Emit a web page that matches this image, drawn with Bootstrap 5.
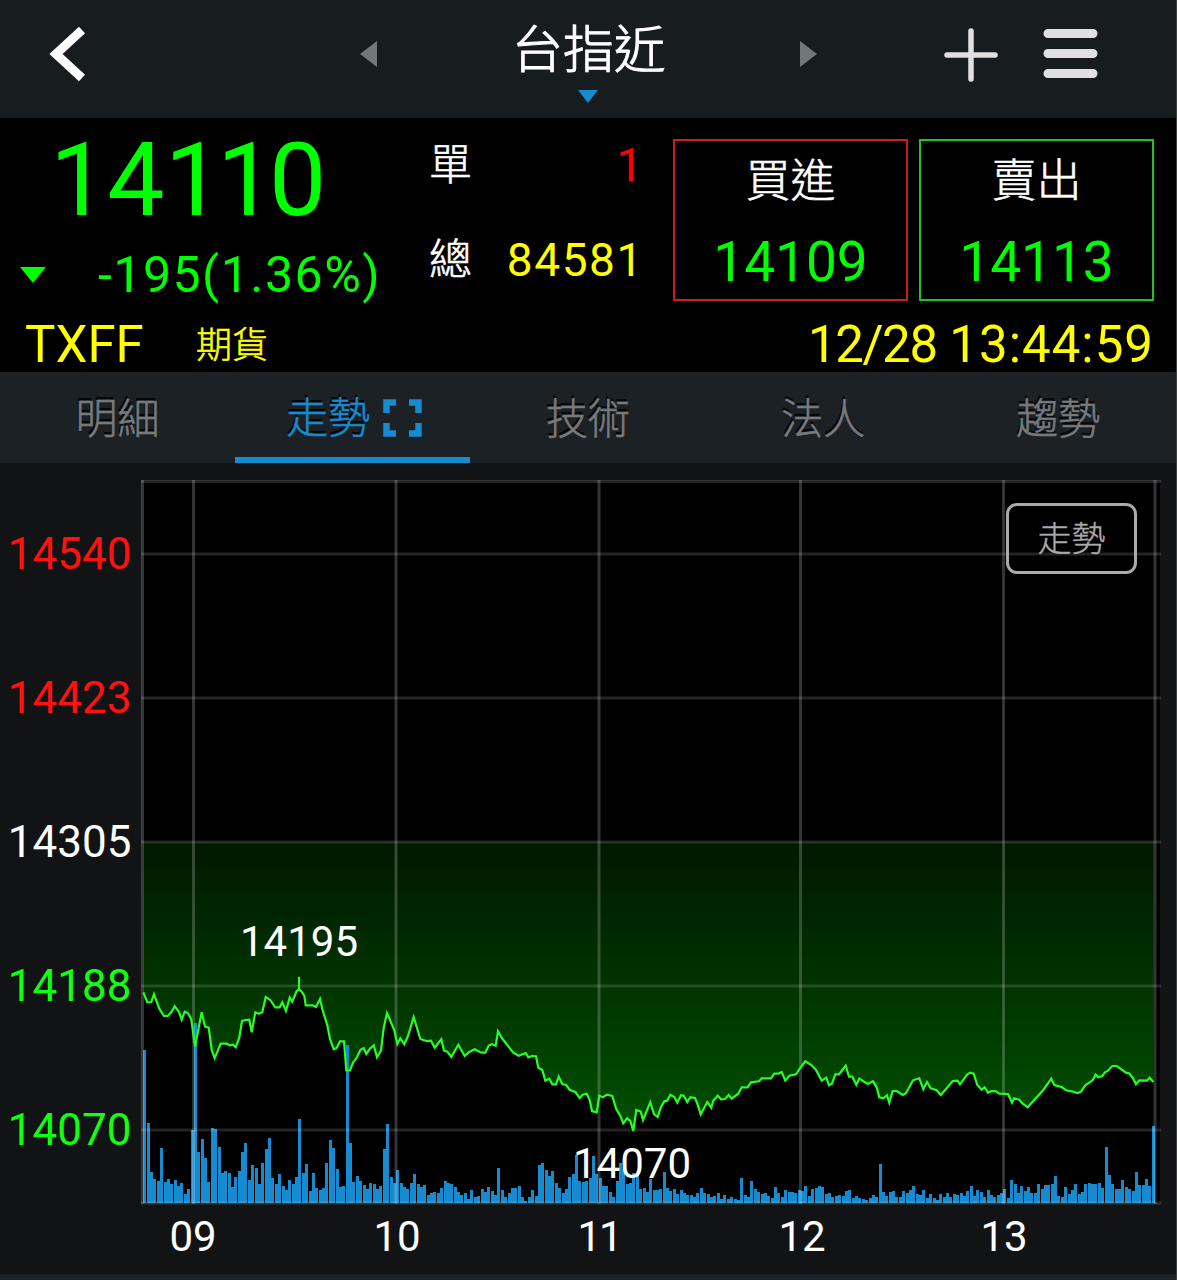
<!DOCTYPE html>
<html lang="zh-Hant">
<head>
<meta charset="utf-8">
<meta name="viewport" content="width=device-width, initial-scale=1">
<title>台指近</title>
<link rel="stylesheet" href="https://cdn.jsdelivr.net/npm/bootstrap@5.3.0/dist/css/bootstrap.min.css">
<style>
body{background:#121315;color:#fff;font-family:Roboto,"Noto Sans CJK TC",sans-serif;font-weight:400;overflow:hidden}
.screen{width:1177px;height:1280px;overflow:hidden;border-right:1px solid #3c4043}
.han{font-family:"Liberation Sans","Noto Sans CJK TC",sans-serif;font-weight:300;-webkit-text-stroke:.6px currentColor}
.topbar{height:118px;background:#171c1f}
.topbar svg{display:block}
.title-zone{width:457px;margin-left:270px}
.title-text{font-size:51px;line-height:72px;height:76px;padding-top:15px;-webkit-text-stroke-width:1px}
.quote{height:254px;background:#000}
.quote-main{height:199px}
.col-price{width:400px}
.last-price{font-size:102px;line-height:124px;padding-left:50px}
.ones{letter-spacing:-.05em}
.change-row{font-size:50px;line-height:66px}
.change-row svg{margin-left:20px;width:26px}
.change-text{margin-left:52px;letter-spacing:1.5px;white-space:nowrap}
.col-vol{width:273px;padding:0 29px 0 29px}
.vol-a{height:94px}.vol-b{height:96px}
.vol-label{font-size:43px}.vol-num{font-size:46px;letter-spacing:1.6px}
.deal{width:235px;height:162px;border:2px solid;margin-top:21px}
.deal-buy{border-color:#cc1c1c;margin-right:11px}
.deal-sell{border-color:#1fc41f}
.deal-name{font-size:45px;line-height:82px;color:#fff}
.deal-price{font-size:55px;line-height:78px}
.code-row{height:55px;line-height:55px;padding:0 22px 0 25px;font-size:51px}
.code{width:171px}
.kind{font-size:36px;line-height:57px}
.day{letter-spacing:-1.4px}
.clock{letter-spacing:1px}
.up{color:#f00}.down{color:#0f0}.warn{color:#ff0}
.tabs{height:91px;background:#1c2126}
.tabs .nav-link{width:20%;font-size:42px;line-height:95px;padding:0;height:91px;border-radius:0;color:#777a7c;text-align:center;text-shadow:-1px -3px 0 #050708}
.tabs .nav-link.active{color:#168bd0;background:none;line-height:90px;padding:2px 0 0 3px;box-shadow:inset 0 -6px #168bd0}
.tab-icon{margin:0 0 2px 8px}
.plot{height:817px;position:relative}
.plot svg{display:block}
.mode-btn{position:absolute;left:1006px;top:40px;width:131px;height:71px;border:3px solid #aaa;border-radius:11px;color:#aaa;font-size:34px;line-height:67px;padding:0;-webkit-text-stroke-width:.4px}
</style>
</head>
<body>
<div class="screen d-flex flex-column">
  <header class="topbar d-flex flex-shrink-0">
    <svg width="90" height="118"><path d="M82 30 56 54 82 78" fill="none" stroke="#fff" stroke-width="9"/></svg>
    <div class="title-zone d-flex justify-content-between">
      <svg width="18" height="118"><path d="M0 54 17 41V67Z" fill="#72777a"/></svg>
      <div class="text-center">
        <div class="title-text han">台指近</div>
        <svg class="mx-auto" width="20" height="30"><path d="M0 14H20L10 27Z" fill="#168bd0"/></svg>
      </div>
      <svg width="18" height="118"><path d="M18 54 1 41V67Z" fill="#72777a"/></svg>
    </div>
    <svg width="359" height="118"><g stroke="#e0e0e0" stroke-linecap="round" fill="none"><path d="M130 55H178M154 31V79" stroke-width="5.500"/><path d="M231 33.500H276M231 53.500H276M231 73.500H276" stroke-width="9"/></g></svg>
  </header>
  <section class="quote flex-shrink-0">
    <div class="quote-main d-flex">
      <div class="col-price down">
        <div class="last-price">14<span class="ones">11</span>0</div>
        <div class="change-row d-flex align-items-center"><svg height="18" viewBox="0 0 26 18"><path d="M0 1H26L13 17Z" fill="#0f0"/></svg><span class="change-text">-195(1.36%)</span></div>
      </div>
      <div class="col-vol">
        <div class="vol-a d-flex justify-content-between align-items-center"><span class="vol-label han">單</span><span class="vol-num up">1</span></div>
        <div class="vol-b d-flex justify-content-between align-items-center"><span class="vol-label han">總</span><span class="vol-num warn">84581</span></div>
      </div>
      <div class="deal deal-buy text-center down"><div class="deal-name han">買進</div><div class="deal-price">14109</div></div>
      <div class="deal deal-sell text-center down"><div class="deal-name han">賣出</div><div class="deal-price">14113</div></div>
    </div>
    <div class="code-row d-flex warn"><span class="code">TXFF</span><span class="kind han">期貨</span><span class="ms-auto"><span class="day">12/28</span> <span class="clock">13:44:59</span></span></div>
  </section>
  <nav class="tabs nav flex-nowrap flex-shrink-0 han">
    <a class="nav-link">明細</a>
    <a class="nav-link active d-flex justify-content-center align-items-center">走勢<svg class="tab-icon" width="44" height="38"><path d="M8.500 14V3.500H18M31 3.500H40.500V14M40.500 24V34.500H31M18 34.500H8.500V24" fill="none" stroke="#168bd0" stroke-width="6.500"/></svg></a>
    <a class="nav-link">技術</a>
    <a class="nav-link">法人</a>
    <a class="nav-link">趨勢</a>
  </nav>
  <main class="plot flex-shrink-0">
    <svg id="chart" width="1176" height="817" viewBox="0 463 1176 817" font-family="Roboto, sans-serif">
      <defs><linearGradient id="shade" gradientUnits="userSpaceOnUse" x1="0" y1="842" x2="0" y2="1130"><stop offset="0" stop-color="#001800"/><stop offset="1" stop-color="#005000"/></linearGradient></defs>
      <rect x="142" y="481" width="1018" height="722" fill="#000"/>
      <rect x="0" y="1274" width="1176" height="6" fill="#1c2126"/>
      <path id="area" fill="url(#shade)"/>
      <path id="bars" fill="#168bd0" shape-rendering="crispEdges"/>
      <g stroke="#fff" stroke-width="3">
        <path stroke-opacity=".14" d="M141 481.500H1161M141 554H1161M141 698H1161M141 842H1161M141 986H1161M141 1130H1161M141 1203H1161"/>
        <path stroke-opacity=".2" d="M142.500 480V1204M193.500 480V1204M396 480V1204M599 480V1204M800.500 480V1204M1003.500 480V1204M1155 480V1204"/>
      </g>
      <path id="price" fill="none" stroke="#26ff26" stroke-width="2.200"/>
      <g font-size="44" text-anchor="end">
        <text x="131.500" y="569" fill="#f11">14540</text><text x="131.500" y="713" fill="#f11">14423</text><text x="131.500" y="857" fill="#fff">14305</text><text x="131.500" y="1001" fill="#1f1">14188</text><text x="131.500" y="1145" fill="#1f1">14070</text>
      </g>
      <g font-size="42" text-anchor="middle" fill="#fff">
        <text x="193" y="1251">09</text><text x="397" y="1251">10</text><text x="599" y="1251" letter-spacing="-2">11</text><text x="802" y="1251">12</text><text x="1004" y="1251">13</text>
        <text x="299" y="956">14195</text><text x="632" y="1178">14070</text>
      </g>
    </svg>
    <button class="btn mode-btn han">走勢</button>
  </main>
</div>
<script src="https://cdn.jsdelivr.net/npm/bootstrap@5.3.0/dist/js/bootstrap.bundle.min.js"></script>
<script>
// Each price segment: origin x, origin y, then pairs of offsets in thirds of a pixel.
const segments=[
[130,960,"40,97 52,127 64,126 72,103 88,146 102,168 113,168 124,157 134,139 147,156 155,179 164,155 174,160 184,178 195,260 215,157 225,200 236,203 245,270 254,295 272,251 290,251 299,256 309,254 317,262 328,233 336,183 347,180 358,179 365,217 376,157 386,161 397,157 407,111 420,119 436,142 449,142 457,127 468,153 479,113 487,125 500,93 507,88 507,50 507,88 516,97 523,107 527,136 547,136 558,141 570,117 577,147 592,196 600,237 611,268 620,264 630,244 642,244 649,331 660,331 669,308 681,292 691,270 701,264 709,282 720,266 731,256 741,292 753,272 761,204"],
[380,960,"21,159 43,211 52,252 61,235 73,253 84,228 101,171 121,237 139,243 153,242 164,263 184,238 192,272 202,275 214,291 235,254 254,288 268,276 284,268 304,278 316,278 326,257 336,253 347,257 354,214 366,235 400,278 416,287 437,279 445,292 456,288 468,289 475,323 487,330 496,362 508,356 517,373 528,373 536,350 547,373 558,374 569,390 586,396 599,414 608,404 620,401 629,420 636,453 650,457 658,407 669,412 680,404 697,408 709,448 721,467 730,490 741,475 751,483"],
[630,1040,"10,273 19,210 32,215 39,240 61,187 72,222 83,231 92,203 103,184 112,182 121,164 133,171 142,188 153,166 161,167 172,186 181,172 195,174 203,194 212,223 232,186 244,203 250,182 263,167 273,178 285,177 296,165 305,176 325,161 335,142 353,142 363,127 387,124 395,115 423,115 433,101 445,101 455,96 466,122 478,107 498,103 508,88 526,64 545,76 558,90 575,122 589,113 597,136 606,131 616,103 627,103 647,77 657,110 667,110 679,134 688,116 700,124 713,132 729,124 740,142 748,172 760,175 771,166 778,188"],
[890,1040,"8,153 20,153 38,165 48,160 69,121 88,115 100,148 111,126 122,145 140,151 152,165 170,145 188,123 203,122 210,133 232,103 241,98 251,101 262,135 275,149 284,142 294,158 304,153 318,154 328,161 354,162 366,188 372,175 388,179 398,191 413,202 460,150 484,116 493,135 516,142 528,151 545,154 562,159 572,156 586,136 608,121 617,104 625,112 637,108 645,97 654,92 667,78 680,78 708,98 717,100 728,113 738,133 748,121 771,122 779,113 790,126"]];
const pts=segments.flatMap(([ox,oy,s])=>s.split(" ").map(p=>{const [x,y]=p.split(",").map(Number);return (ox+x/3).toFixed(1)+" "+(oy+y/3).toFixed(1);}));
document.getElementById("price").setAttribute("d","M"+pts.join("L"));
document.getElementById("area").setAttribute("d","M143 842L"+pts.join("L")+"L1154 842Z");
// One volume bar per minute, 08:45 to 13:45; each group is [floor, tops].
const volume=[
[728,[270,490,635,658,663,563,666,658,672,661,678,669,702,688,511,188,575,538,595,666,503,507,560,638,632,640,682,652,632,575,550,660,614,624,672,609,567,535,653,672,643,678,690,660,672,650,476,638,612,692,640,684,689,684,609,541,563,627,682,678,255,549,666,649,662,675,686,669,672,686,677,567,493,652,670,629,670,680,686,669,643,672,680,674,704,700,695,700,684,663,669,672,681,695,706,700,716,689,712,709,686,695,682,692,706,624,690,710,699,683,684,677,712,723,710,691,709,614,609,629,649,632,669,684,700,686,650,643,584,663,666,663,655,589,643,655,677,677,695,712,663,610,627,671]],
[488,[430,400,400,447,445,457,418,450,451,446,395,444,452,446,463,449,458,464,466,472,460,443,460,463,472,469,458,478,464,477,470,477,480,414,466,470,423,447,455,462,458,468,475,440,460,472,450,457,457,458,449,452,437,468,446,445,437,440,463,460,472,469,464,467,453,449,475,467,473,476,479,473,464,472,372,455,467,457,452,470,470,452,460,449,437,463,465,451,473,461,475,480,463,472,460,471,463,465,458,468,452,437,469,450,457,472,449,465,470,464,460,448,474,420,432,458,438,452,440,460,458,432,447,435,435,432,409,469,471,440,462,450,432,462,455,432,430,431,432,430,444,320,404,432,446,447,420,441,447,452,395,434,435,418,437,258]]];
const heights=volume.flatMap(([floor,tops])=>tops.map(t=>(floor-t)/3));
document.getElementById("bars").setAttribute("d",heights.map((h,i)=>`M${(143.3+i*3.373).toFixed(2)} 1202.500v${(-h).toFixed(1)}h3v${h.toFixed(1)}z`).join(""));
</script>
</body>
</html>
